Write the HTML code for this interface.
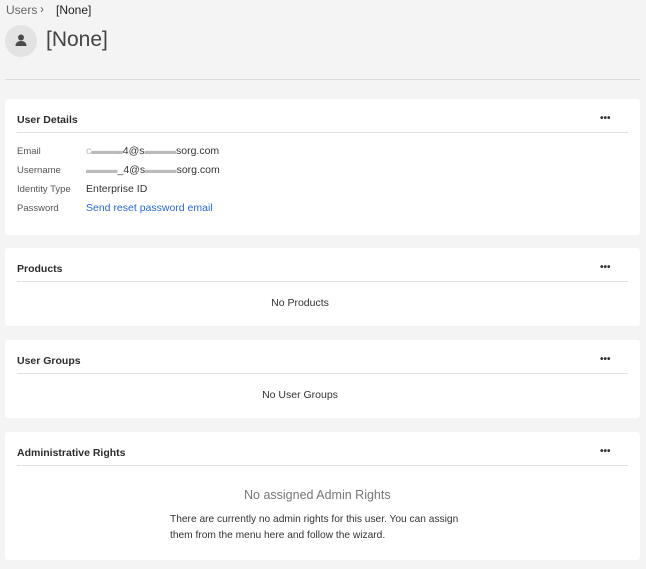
<!DOCTYPE html>
<html><head><style>
body{margin:0;width:646px;height:569px;background:#f4f4f4;font-family:"Liberation Sans",sans-serif;position:relative;overflow:hidden;color:#2c2c2c}
.a{position:absolute;white-space:nowrap}
.card{position:absolute;left:5px;width:635px;background:#fff;border-radius:3px}
.t{position:absolute;left:12px;top:15px;font-size:10.5px;font-weight:bold;color:#2c2c2c}
.line{position:absolute;left:12px;width:611px;height:1px;background:#e1e1e1;top:33px}
.dots{position:absolute;left:595px;top:14px;font-size:10px;font-weight:bold;color:#333}
.l{font-size:9.5px;color:#555}
.v{font-size:10.5px;color:#333}
.c{position:absolute;left:0;width:590px;text-align:center;font-size:10.5px;color:#333}
</style></head><body>
<div class="a" style="left:6px;top:3px;font-size:12px;color:#666">Users</div>
<div class="a" style="left:40px;top:2px;font-size:12px;color:#666">›</div>
<div class="a" style="left:56px;top:3px;font-size:12px;color:#222">[None]</div>
<div class="a" style="left:5px;top:25px;width:32px;height:32px;border-radius:50%;background:#e3e3e3"></div>
<svg class="a" style="left:14px;top:33px" width="14" height="14" viewBox="0 0 14 14"><circle cx="7" cy="4.5" r="3" fill="#4b4b4b"/><path d="M1.5 13c0-3.5 2.5-5 5.5-5s5.5 1.5 5.5 5z" fill="#4b4b4b"/></svg>
<div class="a" style="left:46px;top:28px;font-size:21px;color:#444">[None]</div>
<div class="a" style="left:5px;top:79px;width:635px;height:1px;background:#dcdcdc"></div>

<div class="card" style="top:99px;height:136px">
<div class="t">User Details</div><div class="dots">•••</div><div class="line"></div>
<div class="a l" style="left:12px;top:47px">Email</div><div class="a v" style="left:81px;top:46px"><span style="color:#bbb">c▬▬▬</span>4@s<span style="color:#bbb">▬▬▬</span>sorg.com</div>
<div class="a l" style="left:12px;top:66px">Username</div><div class="a v" style="left:81px;top:65px"><span style="color:#bbb">▬▬▬</span>_4@s<span style="color:#bbb">▬▬▬</span>sorg.com</div>
<div class="a l" style="left:12px;top:85px">Identity Type</div><div class="a v" style="left:81px;top:84px">Enterprise ID</div>
<div class="a l" style="left:12px;top:104px">Password</div><div class="a v" style="left:81px;top:103px;color:#2a6ac6">Send reset password email</div>
</div>

<div class="card" style="top:248px;height:78px">
<div class="t">Products</div><div class="dots">•••</div><div class="line"></div>
<div class="c" style="top:49px">No Products</div>
</div>

<div class="card" style="top:340px;height:78px">
<div class="t">User Groups</div><div class="dots">•••</div><div class="line"></div>
<div class="c" style="top:49px">No User Groups</div>
</div>

<div class="card" style="top:432px;height:128px">
<div class="t">Administrative Rights</div><div class="dots">•••</div><div class="line"></div>
<div class="a" style="left:239px;top:56px;font-size:12.5px;color:#777">No assigned Admin Rights</div>
<div class="a v" style="left:165px;top:80px;line-height:16px;font-size:10.2px">There are currently no admin rights for this user. You can assign<br>them from the menu here and follow the wizard.</div>
</div>
</body></html>
